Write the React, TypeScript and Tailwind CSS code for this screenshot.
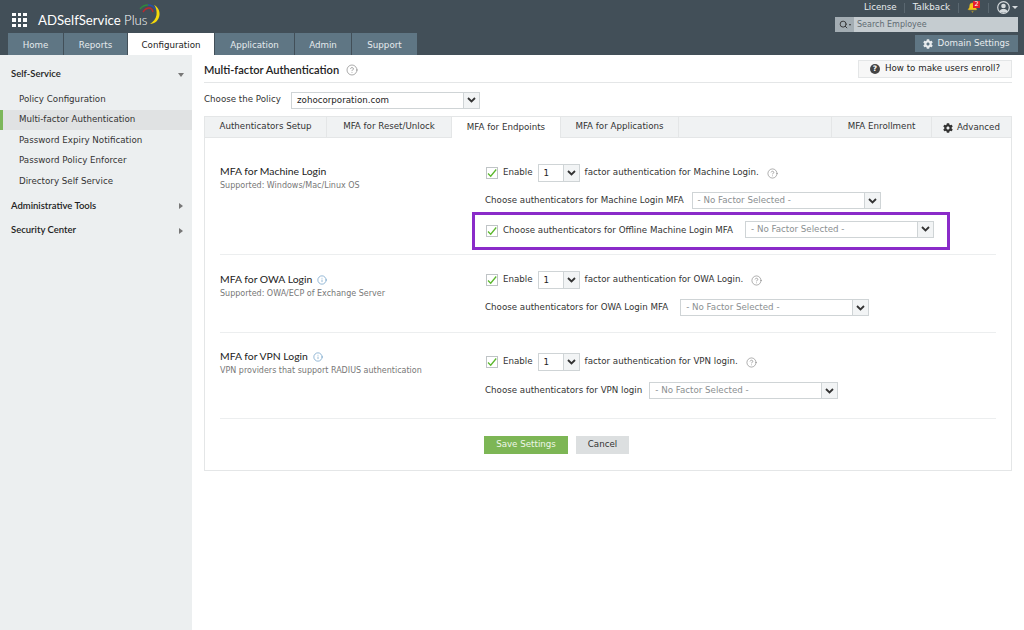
import { Bell, HelpCircle, Info, Search } from 'lucide-react';
import { FaCog } from 'react-icons/fa';

const verdana = "font-['DejaVu_Sans',sans-serif]";

function Chevron() {
  return (
    <svg width="9" height="6" viewBox="0 0 9 6" className="text-[#333]">
      <path d="M1 1l3.5 3.5L8 1" fill="none" stroke="currentColor" strokeWidth="1.8" />
    </svg>
  );
}

function Select({ text, width, muted = true }: { text: string; width: string; muted?: boolean }) {
  return (
    <div className={`flex h-[17px] ${width} items-stretch border border-[#cfd4d6] bg-white`}>
      <span className={`flex-1 pl-[5px] text-[8.7px] leading-[15px] ${muted ? 'text-[#8b8f91]' : 'text-[#222]'}`}>{text}</span>
      <span className="flex w-[16px] items-center justify-center border-l border-[#cfd4d6] bg-[#f2f4f5]">
        <Chevron />
      </span>
    </div>
  );
}

function Box() {
  return (
    <span className="flex h-[12px] w-[12px] shrink-0 items-center justify-center border border-[#bfc4c6] bg-white">
      <svg width="10" height="10" viewBox="0 0 10 10">
        <path d="M1 5.500l2.700 2.700L9.200 1.500" fill="none" stroke="#5cb82e" strokeWidth="1.300" />
      </svg>
    </span>
  );
}

function Question({ size = 11 }: { size?: number }) {
  return <HelpCircle size={size} strokeWidth={1.1} className="text-[#666]" />;
}

function EnableLine({ label }: { label: string }) {
  return (
    <div className="flex items-center">
      <div className="flex h-[18px] items-center pl-[6px]">
        <Box />
        <span className="ml-[5px] text-[8.7px] text-[#333]">Enable</span>
        <div className="ml-[5px] flex h-[18px] w-[42px] border border-[#cfd4d6] bg-white">
          <span className="flex-1 pl-[5px] text-[8.7px] leading-[16px] text-[#222]">1</span>
          <span className="flex w-[16px] items-center justify-center border-l border-[#cfd4d6] bg-[#f2f4f5]">
            <Chevron />
          </span>
        </div>
        <span className="ml-[5px] text-[8.7px] text-[#333]">{label}</span>
      </div>
      <span className="ml-[8px]">
        <Question />
      </span>
    </div>
  );
}

function Heading({ title, sub, info, offset }: { title: string; sub: string; info?: boolean; offset?: string }) {
  return (
    <div className={`w-[260px] shrink-0 ${offset ?? ''}`}>
      <div className="flex h-[14px] items-center gap-[5px] font-['Lato',sans-serif] text-[10.4px] text-[#222]">
        {title}
        {info && <Info size={10} strokeWidth={1.3} className="text-[#3d7fb5]" />}
      </div>
      <div className="mt-[2px] text-[8px] leading-[10px] text-[#777]">{sub}</div>
    </div>
  );
}

function Logo() {
  return (
    <svg width="24" height="24" viewBox="0 0 24 24" className="-mt-[10px] -ml-[11px]">
      <path d="M4 6C6 3.500 9 2 12 2" fill="none" stroke="#2e8b3d" strokeWidth="1.3" />
      <path d="M12 2C15 2 18 3.500 20 6.500" fill="none" stroke="#2a4fa8" strokeWidth="1.5" />
      <path d="M7 9C9 6 11 5 13 5 15 5 16.500 7 17 9" fill="none" stroke="#c0272d" strokeWidth="1.4" />
      <path d="M18 2C22 4 24 8 23.500 12 23 17 19 21 14 21 17 19 20 16 20.500 12 21 8 20 4 18 2Z" fill="#f5d90a" />
    </svg>
  );
}

function Avatar() {
  return (
    <svg width="13" height="13" viewBox="0 0 13 13" className="text-[#d5dadd]">
      <circle cx="6.500" cy="6.500" r="5.800" fill="none" stroke="currentColor" strokeWidth="1.200" />
      <circle cx="6.500" cy="5" r="2.300" fill="currentColor" />
      <path d="M2.500 10.500C3 8.500 4.500 8 6.500 8S10 8.500 10.500 10.500C9 12 4 12 2.500 10.500Z" fill="currentColor" />
    </svg>
  );
}

export default function App() {
  const tabs = ['Home', 'Reports', 'Configuration', 'Application', 'Admin', 'Support'];
  const tabWidths = ['w-[55px]', 'w-[63px]', 'w-[86px]', 'w-[79px]', 'w-[56px]', 'w-[65px]'];
  const side = ['Policy Configuration', 'Multi-factor Authentication', 'Password Expiry Notification', 'Password Policy Enforcer', 'Directory Self Service'];

  return (
    <div className={`flex h-[630px] w-[1024px] flex-col overflow-hidden bg-white ${verdana}`}>
      <header className="flex h-[55px] shrink-0 justify-between bg-[#424f58]">
        <div className="flex flex-col justify-between pl-[8px]">
          <div className="flex items-center pt-[12px] pl-[4px]">
            <div className="grid w-[15px] grid-cols-3 gap-[2px]">
              {Array.from({ length: 9 }).map((_, i) => (
                <span key={i} className="h-[3.5px] w-[3.5px] bg-white" />
              ))}
            </div>
            <span className="ml-[11px] font-['Lato',sans-serif] text-[13.2px] leading-[16px] text-white">
              ADSelfService <span className="font-light">Plus</span>
            </span>
            <Logo />
          </div>
          <nav className="flex gap-px">
            {tabs.map((t, i) => (
              <span
                key={t}
                className={`flex h-[22px] ${tabWidths[i]} items-center justify-center pt-[3px] text-[8.7px] ${t === 'Configuration' ? 'bg-white text-[#222]' : 'bg-[#5f7684] text-[#e6ebee]'}`}
              >
                {t}
              </span>
            ))}
          </nav>
        </div>
        <div className="flex w-[190px] flex-col items-end pr-[6px] text-[8.7px] text-[#e8ecee]">
          <div className="flex h-[15px] items-center">
            <span>License</span>
            <span className="mx-[7.5px] h-[10px] w-px bg-[#5a6770]" />
            <span>Talkback</span>
            <span className="ml-[8px] h-[10px] w-px bg-[#5a6770]" />
            <span className="relative mr-[10px] ml-[8px]">
              <Bell size={11} fill="#f5c518" strokeWidth={1} className="text-[#f5c518]" />
              <span className="absolute -top-[1px] left-[6px] bg-[#e8202a] px-[1.5px] text-[6.5px] leading-[7px] text-white">2</span>
            </span>
            <span className="mr-[8px] h-[10px] w-px bg-[#5a6770]" />
            <Avatar />
            <span className="ml-[2px] h-0 w-0 border-x-[3px] border-t-[3.5px] border-x-transparent border-t-[#d5dadd]" />
          </div>
          <div className="mt-[2px] flex h-[15px] w-[183px] items-stretch bg-[#c5ccd0]">
            <span className="flex w-[19px] items-center justify-center gap-[1px] bg-[#a3adb3]">
              <Search size={9} strokeWidth={2.5} className="text-[#333]" />
              <span className="h-0 w-0 border-x-[1.5px] border-t-[2px] border-x-transparent border-t-[#333]" />
            </span>
            <span className="pl-[3px] text-[8px] leading-[15px] text-[#5f6b72]">Search Employee</span>
          </div>
          <div className="mt-[3px] flex h-[17px] w-[103px] items-center justify-center gap-[4px] bg-[#5f7684] text-[#e8ecee]">
            <FaCog size={10} />
            Domain Settings
          </div>
        </div>
      </header>

      <div className="flex flex-1">
        <aside className="w-[192px] shrink-0 bg-[#eceff0] pt-[11px] text-[8.7px]">
          <div className="flex h-[17px] items-center justify-between pr-[8px] pl-[11px] font-['Lato',sans-serif] text-[9.5px] font-semibold text-[#222]">
            Self-Service
            <span className="h-0 w-0 border-x-[3.5px] border-t-[4px] border-x-transparent border-t-[#777]" />
          </div>
          <ul className="mt-[6px]">
            {side.map((s) => (
              <li
                key={s}
                className={`flex h-[20.5px] items-center text-[#333] ${s === 'Multi-factor Authentication' ? 'border-l-[3px] border-[#7cb65a] bg-[#e0e2e3] pl-[16px]' : 'pl-[19px]'}`}
              >
                {s}
              </li>
            ))}
          </ul>
          {['Administrative Tools', 'Security Center'].map((s, i) => (
            <div
              key={s}
              className={`flex h-[17px] items-center justify-between pr-[9px] pl-[11px] font-['Lato',sans-serif] text-[9.5px] font-semibold text-[#222] ${i === 0 ? 'mt-[6px]' : 'mt-[7.5px]'}`}
            >
              {s}
              <span className="h-0 w-0 border-y-[3.5px] border-l-[4px] border-y-transparent border-l-[#777]" />
            </div>
          ))}
        </aside>

        <main className="ml-[12px] w-[808px]">
          <div className="flex h-[28px] items-start justify-between border-b border-[#e4e6e7] pt-[5px]">
            <div className="mt-[2px] flex h-[16px] items-center gap-[7px] font-['Lato',sans-serif] text-[11.1px] font-semibold text-[#222]">
              Multi-factor Authentication
              <Question size={12} />
            </div>
            <div className="flex h-[18px] w-[154px] items-center justify-center gap-[5px] border border-[#e4e6e7] bg-[#f7f7f7] text-[8.7px] text-[#222]">
              <span className="flex h-[10px] w-[10px] items-center justify-center rounded-full bg-[#444] text-[7.5px] font-bold text-white">?</span>
              How to make users enroll?
            </div>
          </div>

          <div className="mt-[8px] flex h-[18px] items-center text-[8.7px] text-[#333]">
            <span className="w-[87px]">Choose the Policy</span>
            <Select text="zohocorporation.com" width="w-[189px]" muted={false} />
          </div>

          <div className="mt-[7px] flex h-[22px] border border-[#e4e6e7] bg-[#f0f2f3] text-[8.7px] text-[#333]">
            <span className="flex w-[122px] items-center justify-center border-r border-[#e4e6e7]">Authenticators Setup</span>
            <span className="flex w-[124px] items-center justify-center">MFA for Reset/Unlock</span>
            <span className="-mb-px flex w-[110px] items-center justify-center border-x border-[#e4e6e7] bg-white">MFA for Endpoints</span>
            <span className="flex w-[118px] items-center justify-center border-r border-[#e4e6e7]">MFA for Applications</span>
            <span className="flex-1" />
            <span className="flex w-[100px] items-center justify-center border-l border-[#e4e6e7]">MFA Enrollment</span>
            <span className="flex w-[80px] items-center justify-center gap-[4px] border-l border-[#e4e6e7] pt-[1px]">
              <FaCog size={10} />
              Advanced
            </span>
          </div>

          <div className="h-[333px] border border-t-0 border-[#e4e6e7] px-[15px] text-[8.7px] text-[#333]">
            <section className="flex h-[117px] border-b border-[#eceeef] pt-[26px]">
              <Heading title="MFA for Machine Login" sub="Supported: Windows/Mac/Linux OS" offset="mt-[1px]" />
              <div>
                <EnableLine label="factor authentication for Machine Login." />
                <div className="mt-[10px] flex h-[17px] items-center pl-[5px]">
                  <span className="mr-[8px]">Choose authenticators for Machine Login MFA</span>
                  <Select text="- No Factor Selected -" width="w-[189px]" />
                </div>
                <div className="mt-[3px] -ml-[8px] flex h-[38px] w-[478px] items-center border-[3px] border-[#8a2bc9] pl-[11px]">
                  <Box />
                  <span className="ml-[5px] w-[242px]">Choose authenticators for Offline Machine Login MFA</span>
                  <span className="mb-[4px]">
                    <Select text="- No Factor Selected -" width="w-[189px]" />
                  </span>
                </div>
              </div>
            </section>

            <section className="flex h-[78px] border-b border-[#eceeef] pt-[16px]">
              <Heading title="MFA for OWA Login" sub="Supported: OWA/ECP of Exchange Server" info offset="mt-[2px]" />
              <div>
                <EnableLine label="factor authentication for OWA Login." />
                <div className="mt-[10px] flex h-[17px] items-center pl-[5px]">
                  <span className="mr-[12px]">Choose authenticators for OWA Login MFA</span>
                  <Select text="- No Factor Selected -" width="w-[189px]" />
                </div>
              </div>
            </section>

            <section className="flex h-[86px] border-b border-[#eceeef] pt-[20px]">
              <Heading title="MFA for VPN Login" sub="VPN providers that support RADIUS authentication" info offset="-mt-[3px]" />
              <div>
                <EnableLine label="factor authentication for VPN login." />
                <div className="mt-[11px] flex h-[17px] items-center pl-[5px]">
                  <span className="mr-[7px]">Choose authenticators for VPN login</span>
                  <Select text="- No Factor Selected -" width="w-[189px]" />
                </div>
              </div>
            </section>

            <div className="mt-[17px] flex gap-[8px] pl-[264px]">
              <span className="flex h-[18px] w-[84px] items-center justify-center bg-[#7db655] text-[8.7px] text-[#eef6e8]">Save Settings</span>
              <span className="flex h-[18px] w-[53px] items-center justify-center bg-[#dcdfe0] text-[8.7px] text-[#333]">Cancel</span>
            </div>
          </div>
        </main>
      </div>
    </div>
  );
}
